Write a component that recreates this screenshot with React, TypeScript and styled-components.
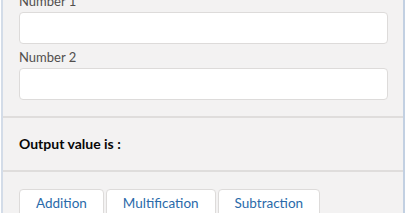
import React from "react";
import styled, { createGlobalStyle } from "styled-components";

const Global = createGlobalStyle`
  html, body { margin: 0; padding: 0; background: #ffffff; overflow: hidden; }
  body { font-family: Lato, "Open Sans", Arial, sans-serif; }
  * { box-sizing: border-box; }
`;

const Page = styled.div`
  padding: 0 2px 0 1px;
  width: 407px;
  height: 213px;
  overflow: hidden;
`;

const Card = styled.div`
  margin-top: -12px;
  background: #f3f2f2;
  border-left: 2px solid #d3dce8;
  border-right: 2px solid #c2d0e2;
  display: flex;
  flex-direction: column;
`;

const Section = styled.div<{ $pt: number; $pb: number; $divider?: boolean }>`
  padding: ${(p) => p.$pt}px 15px ${(p) => p.$pb}px 16px;
  border-top: ${(p) => (p.$divider ? "2px solid #dfdddc" : "none")};
  display: flex;
  flex-direction: column;
`;

const Label = styled.label`
  display: block;
  padding-top: 4px;
  margin-bottom: 2px;
  line-height: 18px;
  font-size: 13px;
  color: #514f4d;
`;

const Input = styled.input`
  display: block;
  width: 100%;
  height: 32px;
  border: 1px solid #dddbda;
  border-radius: 4px;
  background: #ffffff;
  padding: 0 12px;
  font-size: 13px;
  outline: none;
`;

const Output = styled.div`
  font-size: 14px;
  font-weight: 700;
  color: #080707;
  line-height: 18px;
`;

const ButtonRow = styled.div`
  display: flex;
  gap: 2px;
`;

const Button = styled.button`
  height: 32px;
  padding: 0 16px 3px;
  border: 1px solid #dddbda;
  border-radius: 4px;
  background: #ffffff;
  color: #2a6aaa;
  font-family: Lato, "Open Sans", Arial, sans-serif;
  font-size: 13.5px;
  line-height: 27px;
  cursor: pointer;
`;

export default function App() {
  return (
    <>
      <Global />
      <Page>
        <Card>
          <Section $pt={0} $pb={16}>
            <Label>Number 1</Label>
            <Input type="text" />
            <Label>Number 2</Label>
            <Input type="text" />
          </Section>
          <Section $pt={17} $pb={17} $divider>
            <Output>Output value is :</Output>
          </Section>
          <Section $pt={17} $pb={16} $divider>
            <ButtonRow>
              <Button>Addition</Button>
              <Button>Multification</Button>
              <Button>Subtraction</Button>
            </ButtonRow>
          </Section>
        </Card>
      </Page>
    </>
  );
}
